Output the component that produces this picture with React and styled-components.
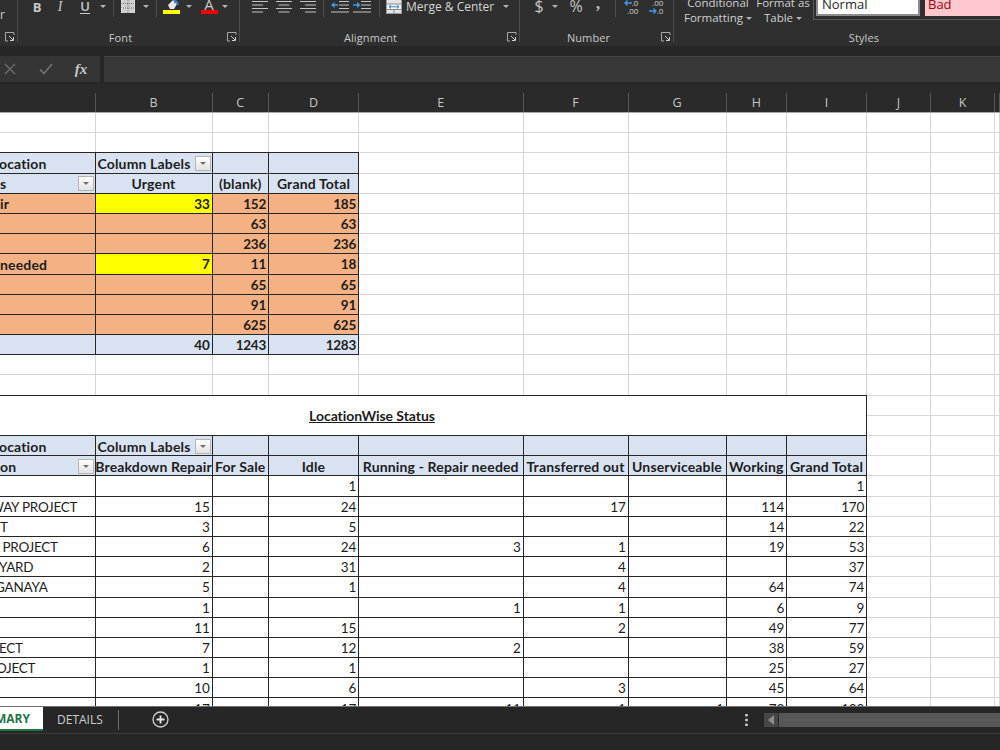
import styled, { createGlobalStyle } from 'styled-components'

const COLUMNS = '95.5px 117px 56.5px 90px 164.5px 105px 98px 60.5px 80px 64px 64px 1fr'
const LETTERS = ['', 'B', 'C', 'D', 'E', 'F', 'G', 'H', 'I', 'J', 'K', '']
const COLUMN_COUNT = 12

const blank = n => Array.from({ length: n }, () => ({}))

const head = (text, extra = {}) => ({ text, kind: 'head', align: 'center', ...extra })
const orange = (text, extra = {}) => ({ text, kind: 'orange', align: 'right', bold: true, ...extra })
const total = text => ({ text, kind: 'head', align: 'right', bold: true })
const plain = text => ({ text, kind: 'plain', align: 'right' })

const summaryRows = [
  ['ir', 33, 152, 185],
  ['', '', 63, 63],
  ['', '', 236, 236],
  ['needed', 7, 11, 18],
  ['', '', 65, 65],
  ['', '', 91, 91],
  ['', '', 625, 625],
]

const statusRows = [
  ['', '', '', 1, '', '', '', '', 1, 0],
  ['WAY PROJECT', 15, '', 24, '', 17, '', 114, 170, -10],
  ['T', 3, '', 5, '', '', '', 14, 22, 0],
  ['L PROJECT', 6, '', 24, 3, 1, '', 19, 53, -7],
  ['YARD', 2, '', 31, '', 4, '', '', 37, -1],
  ['GANAYA', 5, '', 1, '', 4, '', 64, 74, -5],
  ['', 1, '', '', 1, 1, '', 6, 9, 0],
  ['', 11, '', 15, '', 2, '', 49, 77, 0],
  ['ECT', 7, '', 12, 2, '', '', 38, 59, -1],
  ['OJECT', 1, '', 1, '', '', '', 25, 27, -4],
  ['', 10, '', 6, '', 3, '', 45, 64, 0],
  ['', 17, '', 17, 11, 1, 1, 73, 120, 0],
]

const statusHeaders = ['Breakdown Repair', 'For Sale', 'Idle', 'Running - Repair needed', 'Transferred out', 'Unserviceable', 'Working', 'Grand Total']

const sheetRows = [
  blank(COLUMN_COUNT),
  blank(COLUMN_COUNT),
  [head('ocation', { align: 'left', indent: -1 }), head('Column Labels', { align: 'left', filter: true }), head(''), head(''), ...blank(8)],
  [head('s', { align: 'left', filter: true }), head('Urgent'), head('(blank)'), head('Grand Total'), ...blank(8)],
  ...summaryRows.map(([label, urgent, none, sum]) => [
    orange(label, { align: 'left' }),
    urgent ? orange(urgent, { kind: 'yellow' }) : orange(''),
    orange(none),
    orange(sum),
    ...blank(8),
  ]),
  [total(''), total(40), total(1243), total(1283), ...blank(8)],
  blank(COLUMN_COUNT),
  blank(COLUMN_COUNT),
  [{ text: 'LocationWise Status', kind: 'title' }, ...blank(3)],
  blank(3),
  [
    head('ocation', { align: 'left', indent: -1 }),
    head('Column Labels', { align: 'left', filter: true }),
    ...statusHeaders.slice(1).map(() => head('')),
    ...blank(3),
  ],
  [
    head('on', { align: 'left', filter: true }),
    ...statusHeaders.map(text => head(text, { tight: true })),
    ...blank(3),
  ],
  ...statusRows.map(row => {
    const indent = row[9]
    return [
      { text: row[0], kind: 'plain', align: 'left', indent },
      ...row.slice(1, 9).map(plain),
      ...blank(3),
    ]
  }),
]

function Caret({ w = 8, ml = 0 }) {
  return (
    <Tool $w={w} $ml={ml}>
      <CaretMark />
    </Tool>
  )
}

function Launcher() {
  return (
    <LauncherIcon width="10" height="10" viewBox="0 0 10 10" fill="none">
      <path d="M9 3V.5H.5V9H3" stroke="#a8a8a8" />
      <path d="M4 4l4 4M8.5 5v3.5H5" stroke="#d0d0d0" />
    </LauncherIcon>
  )
}

function AlignIcon({ side }) {
  const rows = [[16, 1.5], [11, 5], [16, 8.5], [11, 12]]
  return (
    <svg width="16" height="13" viewBox="0 0 16 13">
      {rows.map(([len, y]) => {
        const x = side === 'left' ? 0 : side === 'right' ? 16 - len : (16 - len) / 2
        return <rect key={y} x={x} y={y - 0.5} width={len} height="1" fill="#c4c4c4" />
      })}
    </svg>
  )
}

function IndentIcon({ flip }) {
  return (
    <svg width="18" height="13" viewBox="0 0 18 13">
      <g fill="#c4c4c4">
        <rect x="8" y="1" width="10" height="1" />
        <rect x="8" y="4.5" width="10" height="1" />
        <rect x="8" y="8" width="10" height="1" />
        <rect x="0" y="11.5" width="18" height="1" />
      </g>
      <path
        d={flip ? 'M0 4.2h4V2l3.5 3L4 8V5.8H0z' : 'M7 4.2H3.5V2L0 5l3.5 3V5.8H7z'}
        fill="#3f9ae8"
      />
    </svg>
  )
}

function MergeIcon() {
  return (
    <svg width="16" height="14" viewBox="0 0 16 14">
      <rect x="0.5" y="-1" width="15" height="14.5" fill="#e4e4e4" stroke="#9a9a9a" />
      <rect x="1" y="4" width="14" height="5.5" fill="#f6f6f6" />
      <path d="M1 4h14M1 9.5h14M8 9.5V14" stroke="#8a8a8a" />
      <path d="M3 6.8h10M3 6.8l2-1.6M3 6.8l2 1.6M13 6.8l-2-1.6M13 6.8l-2 1.6" stroke="#2f86d6" />
    </svg>
  )
}

function BorderIcon() {
  return (
    <svg width="14" height="13" viewBox="0 0 14 13">
      <rect width="14" height="13" fill="#cfcfcf" />
      <path d="M7 0v13M0 3.5h14M0 8h14" stroke="#7c7c7c" strokeDasharray="1 1" />
      <path d="M0.5 0v13M13.5 0v13" stroke="#f0f0f0" strokeDasharray="1 1" />
    </svg>
  )
}

function FillIcon() {
  return (
    <svg width="17" height="14" viewBox="0 0 17 14">
      <path d="M5 5l5-5 4 4-3 5H7z" fill="#e8e8e8" />
      <path d="M11 0c3 0 5 2 5 6-1-2-3-3-5-3z" fill="#3f7fc4" />
      <rect y="10" width="17" height="4" fill="#ffff00" />
    </svg>
  )
}

function CancelIcon() {
  return (
    <svg width="12" height="12" viewBox="0 0 12 12" fill="none">
      <path d="M1 1l10 10M11 1L1 11" stroke="#6e6e6e" strokeWidth="1.4" />
    </svg>
  )
}

function ConfirmIcon() {
  return (
    <svg width="14" height="12" viewBox="0 0 14 12" fill="none">
      <path d="M1 6.5L5 10.5 13 1" stroke="#6e6e6e" strokeWidth="1.8" />
    </svg>
  )
}

function DecimalArrow({ right }) {
  return (
    <svg width="8" height="6" viewBox="0 0 8 6" fill="none">
      <path d={right ? 'M0 3h7M4.5 .5L7 3 4.5 5.5' : 'M8 3H1M3.5 .5L1 3l2.5 2.5'} stroke="#3f9ae8" strokeWidth="1.3" />
    </svg>
  )
}

function Ribbon() {
  return (
    <RibbonBar>
      <RibbonGroup $w={18}>
        <RibbonBody>
          <ClippedWord>r</ClippedWord>
        </RibbonBody>
        <RibbonLabel $offset={0}>
          <Launcher />
        </RibbonLabel>
      </RibbonGroup>

      <RibbonGroup $w={222}>
        <RibbonBody>
          <ToolRow $pad={7}>
            <Tool $w={24}><BoldMark>B</BoldMark></Tool>
            <Tool $w={22}><ItalicMark>I</ItalicMark></Tool>
            <Tool $w={28}><UnderMark>U</UnderMark></Tool>
            <Caret w={7} />
            <ToolRule $ml={7} />
            <Tool $w={28}><BorderIcon /></Tool>
            <Caret />
            <ToolRule $ml={6} />
            <Tool $w={28}><FillIcon /></Tool>
            <Caret />
            <Tool $w={24} $ml={4}>
              <ColorGlyph>
                <ColorLetter>A</ColorLetter>
                <ColorBar />
              </ColorGlyph>
            </Tool>
            <Caret />
          </ToolRow>
        </RibbonBody>
        <RibbonLabel $offset={16}>
          Font
          <Launcher />
        </RibbonLabel>
      </RibbonGroup>

      <RibbonGroup $w={280}>
        <RibbonBody>
          <ToolRow $pad={8}>
            <Tool $w={24}><AlignIcon side="left" /></Tool>
            <Tool $w={24}><AlignIcon side="center" /></Tool>
            <Tool $w={24}><AlignIcon side="right" /></Tool>
            <ToolRule $ml={3} />
            <Tool $w={22} $ml={5}><IndentIcon /></Tool>
            <Tool $w={22}><IndentIcon flip /></Tool>
            <ToolRule $ml={6} />
            <Tool $w={16} $ml={6}><MergeIcon /></Tool>
            <MergeLabel>Merge &amp; Center</MergeLabel>
            <Caret ml={8} />
          </ToolRow>
        </RibbonBody>
        <RibbonLabel $offset={18}>
          Alignment
          <Launcher />
        </RibbonLabel>
      </RibbonGroup>

      <RibbonGroup $w={154}>
        <RibbonBody>
          <ToolRow $pad={8}>
            <Tool $w={22}><NumberMark>$</NumberMark></Tool>
            <Caret ml={1} />
            <Tool $w={24} $ml={5}><NumberMark>%</NumberMark></Tool>
            <Tool $w={20}><CommaMark>,</CommaMark></Tool>
            <ToolRule $ml={7} />
            <Tool $w={30}>
              <DecimalMark>
                <DecimalLine><DecimalArrow />.0</DecimalLine>
                <DecimalLine>.00</DecimalLine>
              </DecimalMark>
            </Tool>
            <Tool $w={20}>
              <DecimalMark>
                <DecimalLine>.00</DecimalLine>
                <DecimalLine><DecimalArrow right />.0</DecimalLine>
              </DecimalMark>
            </Tool>
          </ToolRow>
        </RibbonBody>
        <RibbonLabel $offset={16}>
          Number
          <Launcher />
        </RibbonLabel>
      </RibbonGroup>

      <RibbonGroup $w={380} $last>
        <StylesBody>
          <BigButton $w={70}>
            <span>Conditional</span>
            <span>Formatting <CaretMark /></span>
          </BigButton>
          <BigButton $w={56}>
            <span>Format as</span>
            <span>Table <CaretMark /></span>
          </BigButton>
          <StyleGallery>
            <NormalStyle>Normal</NormalStyle>
            <BadStyle>Bad</BadStyle>
          </StyleGallery>
        </StylesBody>
        <RibbonLabel $offset={0}>Styles</RibbonLabel>
      </RibbonGroup>
    </RibbonBar>
  )
}

function FormulaArea() {
  return (
    <FormulaBar>
      <FormulaButtons>
        <CancelIcon />
        <ConfirmIcon />
        <FxMark>fx</FxMark>
      </FormulaButtons>
      <FormulaInput />
    </FormulaBar>
  )
}

function Sheet() {
  return (
    <SheetGrid>
      {sheetRows.flatMap((row, r) =>
        row.map((cell, c) => (
          <Cell
            key={`${r}-${c}`}
            $kind={cell.kind}
            $align={cell.align}
            $bold={cell.bold}
            $tight={cell.tight}
            $first={c === 0}
          >
            {cell.text !== undefined && cell.text !== '' && (
              <CellText
                $indent={cell.indent}
                $word={typeof cell.text === 'string' && (cell.kind === 'head' || cell.kind === 'orange')}
              >
                {cell.text}
              </CellText>
            )}
            {cell.filter && (
              <FilterButton>
                <CaretMark $dark />
              </FilterButton>
            )}
          </Cell>
        ))
      )}
    </SheetGrid>
  )
}

function Footer() {
  return (
    <FooterBar>
      <TabRow>
        <ActiveTab>MARY</ActiveTab>
        <SheetTab>DETAILS</SheetTab>
        <TabRule />
        <AddSheet>
          <svg width="17" height="17" viewBox="0 0 17 17" fill="none">
            <circle cx="8.5" cy="8.5" r="7.5" stroke="#d0d0d0" strokeWidth="1.3" />
            <path d="M8.5 4.5v8M4.5 8.5h8" stroke="#e8e8e8" strokeWidth="1.8" />
          </svg>
        </AddSheet>
        <TabDots>
          <svg width="3" height="12" viewBox="0 0 3 12" fill="#d0d0d0">
            <rect x="0.25" y="0" width="2.5" height="2.4" />
            <rect x="0.25" y="4.8" width="2.5" height="2.4" />
            <rect x="0.25" y="9.6" width="2.5" height="2.4" />
          </svg>
        </TabDots>
        <ScrollButton>
          <svg width="6" height="10" viewBox="0 0 6 10" fill="#8c8c8c">
            <path d="M6 0v10L0 5z" />
          </svg>
        </ScrollButton>
        <ScrollTrack />
      </TabRow>
      <StatusBar />
    </FooterBar>
  )
}

export default function App() {
  return (
    <Page>
      <GlobalStyle />
      <Ribbon />
      <FormulaArea />
      <ColumnHeaders>
        {LETTERS.map((letter, i) => (
          <ColumnHeader key={i}>{letter}</ColumnHeader>
        ))}
      </ColumnHeaders>
      <Sheet />
      <Footer />
    </Page>
  )
}

const GlobalStyle = createGlobalStyle`
  html, body {
    margin: 0;
    background: #262626;
    overflow: hidden;
  }
  * {
    box-sizing: border-box;
  }
`

const Page = styled.div`
  display: flex;
  flex-direction: column;
  width: 1000px;
  height: 750px;
  overflow: hidden;
  font-family: 'Open Sans', 'Liberation Sans', sans-serif;
`

const RibbonBar = styled.div`
  display: flex;
  flex: none;
  height: 46px;
  overflow: hidden;
  background: #2f2f2f;
  color: #d2d2d2;
`

const RibbonGroup = styled.div`
  flex: none;
  width: ${p => p.$w}px;
  height: 42px;
  border-right: ${p => (p.$last ? 'none' : '1px solid #4c4c4c')};
`

const RibbonBody = styled.div`
  height: 29px;
`

const ClippedWord = styled.div`
  padding-top: 7px;
  font-size: 12px;
  line-height: 16px;
`

const RibbonLabel = styled.div`
  position: relative;
  height: 13px;
  padding-right: ${p => p.$offset}px;
  font-size: 11px;
  line-height: 17px;
  letter-spacing: 0.1px;
  text-align: center;
  color: #c8c8c8;
`

const LauncherIcon = styled.svg`
  position: absolute;
  top: 3px;
  right: 2px;
`

const ToolRow = styled.div`
  display: flex;
  align-items: center;
  height: 13px;
  padding-left: ${p => p.$pad}px;
`

const Tool = styled.div`
  display: flex;
  flex: none;
  align-items: center;
  justify-content: center;
  width: ${p => p.$w}px;
  height: 13px;
  margin-left: ${p => p.$ml || 0}px;
`

const ToolRule = styled.div`
  flex: none;
  width: 1px;
  height: 17px;
  margin-top: 4px;
  margin-left: ${p => p.$ml}px;
  background: #4c4c4c;
`

const CaretMark = styled.span`
  display: inline-block;
  width: 0;
  height: 0;
  border-left: 3.5px solid transparent;
  border-right: 3.5px solid transparent;
  border-top: 3.5px solid ${p => (p.$dark ? '#6f6f6f' : '#b4b4b4')};
  vertical-align: 2px;
`

const BoldMark = styled.span`
  font-size: 13px;
  font-weight: 700;
  color: #c8c8c8;
`

const ItalicMark = styled.span`
  font-family: 'Liberation Serif', serif;
  font-size: 14px;
  font-style: italic;
  color: #c8c8c8;
`

const UnderMark = styled.span`
  font-size: 13px;
  font-weight: 600;
  line-height: 13px;
  color: #c8c8c8;
  border-bottom: 1px solid #c8c8c8;
`

const ColorGlyph = styled.div`
  display: flex;
  flex-direction: column;
  align-items: center;
  width: 17px;
  height: 14px;
`

const ColorLetter = styled.span`
  height: 10px;
  font-size: 15px;
  line-height: 9px;
  color: #c8c8c8;
`

const ColorBar = styled.span`
  flex: none;
  width: 17px;
  height: 4px;
  background: #f00000;
`

const MergeLabel = styled.span`
  flex: none;
  margin-left: 4px;
  font-size: 12px;
  line-height: 13px;
  color: #d6d6d6;
`

const NumberMark = styled.span`
  font-size: 16px;
  line-height: 13px;
  color: #c4c4c4;
`

const CommaMark = styled.span`
  margin-top: -5px;
  font-family: 'Liberation Serif', serif;
  font-size: 16px;
  font-weight: 700;
  line-height: 8px;
  color: #c4c4c4;
`

const DecimalMark = styled.div`
  display: flex;
  flex: none;
  flex-direction: column;
  align-items: flex-end;
  font-size: 8px;
  line-height: 8px;
  color: #cfcfcf;
`

const DecimalLine = styled.span`
  display: flex;
  align-items: center;
  height: 8px;
`

const StylesBody = styled.div`
  display: flex;
  align-items: flex-start;
  height: 29px;
  padding-left: 9px;
`

const BigButton = styled.div`
  display: flex;
  flex: none;
  flex-direction: column;
  align-items: center;
  width: ${p => p.$w}px;
  margin-top: -5px;
  margin-right: 2px;
  font-size: 11.5px;
  line-height: 15px;
  white-space: nowrap;
  color: #d0d0d0;
`

const StyleGallery = styled.div`
  display: flex;
  flex: none;
  gap: 5px;
  height: 26px;
  width: 220px;
  margin-top: -6px;
  padding: 0 0 3px 2px;
  border-left: 1px solid #5a5a5a;
  border-bottom: 1px solid #5a5a5a;
`

const NormalStyle = styled.div`
  width: 104px;
  padding-left: 4px;
  border: 2px solid #8c8c8c;
  background: #ffffff;
  font-size: 13px;
  line-height: 16px;
  color: #1f1f1f;
`

const BadStyle = styled.div`
  flex: 1;
  padding: 2px 0 0 3px;
  background: #ffc7ce;
  font-size: 13px;
  line-height: 16px;
  color: #9c0006;
`

const FormulaBar = styled.div`
  display: flex;
  flex: none;
  gap: 4px;
  height: 38px;
  padding: 10px 0 2px;
  background: #262626;
`

const FormulaButtons = styled.div`
  display: grid;
  flex: none;
  grid-template-columns: 20px 52px 18px;
  align-items: center;
  justify-items: center;
  width: 100px;
  background: #353535;
`

const FxMark = styled.span`
  font-family: 'Liberation Serif', serif;
  font-size: 15px;
  font-style: italic;
  font-weight: 700;
  color: #c8c8c8;
`

const FormulaInput = styled.div`
  flex: 1;
  background: #383838;
  border-top: 1px solid #444444;
`

const ColumnHeaders = styled.div`
  display: grid;
  flex: none;
  grid-template-columns: ${COLUMNS};
  height: 29px;
  padding-top: 9px;
  background: #2a2a2a;
  border-bottom: 1px solid #a8a8a8;
`

const ColumnHeader = styled.div`
  border-right: 1px solid #565656;
  font-size: 12.5px;
  line-height: 19px;
  text-align: center;
  color: #c6c6c6;
`

const SheetGrid = styled.div`
  display: grid;
  flex: none;
  height: 593px;
  grid-template-columns: ${COLUMNS};
  grid-auto-rows: 20.2px;
  overflow: hidden;
  background: #ffffff;
  font-family: Lato, 'Liberation Sans', sans-serif;
  font-size: 13.5px;
  letter-spacing: -0.25px;
  color: #1d1d1d;
`

const cellFill = {
  head: '#d9e2f1',
  orange: '#f4b183',
  yellow: '#ffff00',
  plain: '#ffffff',
  title: '#ffffff',
}

const Cell = styled.div`
  display: flex;
  align-items: center;
  justify-content: ${p => (p.$align === 'right' ? 'flex-end' : p.$align === 'center' ? 'center' : 'flex-start')};
  min-width: 0;
  padding: 1px ${p => (p.$kind ? '2px' : '0')} 0 ${p => (p.$first ? '0' : '2px')};
  overflow: hidden;
  white-space: nowrap;
  border-right: 1px solid #d6d6d6;
  border-bottom: 1px solid #d6d6d6;
  ${p =>
    p.$kind &&
    `
    margin: -1px 0 0 -1px;
    border: 1px solid #262626;
    background: ${cellFill[p.$kind]};
    font-weight: ${p.$kind === 'head' || p.$bold ? 700 : 400};
  `}
  ${p =>
    p.$kind === 'title' &&
    `
    grid-column: 1 / span 9;
    grid-row: span 2;
    justify-content: center;
    padding-right: 122px;
    font-size: 14px;
    font-weight: 700;
    letter-spacing: -0.05px;
    text-decoration: underline;
  `}
  ${p => p.$tight && 'padding: 1px 0 0;'}
`

const CellText = styled.span`
  display: block;
  flex: ${p => (p.$indent ? '1' : 'none')};
  text-indent: ${p => p.$indent || 0}px;
  ${p => p.$word && 'font-size: 14px; letter-spacing: 0.15px;'}
`

const FilterButton = styled.div`
  display: flex;
  flex: none;
  align-items: center;
  justify-content: center;
  width: 16px;
  height: 15px;
  margin-left: auto;
  margin-right: -1px;
  border: 1px solid #b5b5b5;
  background: linear-gradient(180deg, #ffffff, #e2e2e2);
`

const FooterBar = styled.div`
  flex: none;
  height: 44px;
  border-top: 1px solid #707070;
  background: #262626;
`

const TabRow = styled.div`
  display: flex;
  align-items: flex-start;
  height: 27px;
  border-bottom: 1px solid #3c3c3c;
`

const ActiveTab = styled.div`
  display: flex;
  flex: none;
  justify-content: flex-end;
  width: 43px;
  height: 24px;
  padding-right: 13px;
  overflow: hidden;
  border-bottom: 2px solid #217346;
  background: #ffffff;
  font-size: 12px;
  font-weight: 700;
  line-height: 24px;
  color: #217346;
`

const SheetTab = styled.div`
  margin-left: 14px;
  font-size: 12px;
  line-height: 25px;
  color: #cfcfcf;
`

const TabRule = styled.div`
  width: 1px;
  height: 20px;
  margin: 3px 0 0 15px;
  background: #6a6a6a;
`

const AddSheet = styled.div`
  display: flex;
  margin: 4px 0 0 33px;
`

const TabDots = styled.div`
  display: flex;
  margin: 7px 0 0 576px;
`

const ScrollButton = styled.div`
  display: flex;
  align-items: center;
  justify-content: center;
  width: 14px;
  height: 14px;
  margin: 6px 0 0 16px;
  background: #474747;
`

const ScrollTrack = styled.div`
  flex: 1;
  height: 14px;
  margin: 6px 0 0 1px;
  background: #585858;
`

const StatusBar = styled.div`
  height: 16px;
`
